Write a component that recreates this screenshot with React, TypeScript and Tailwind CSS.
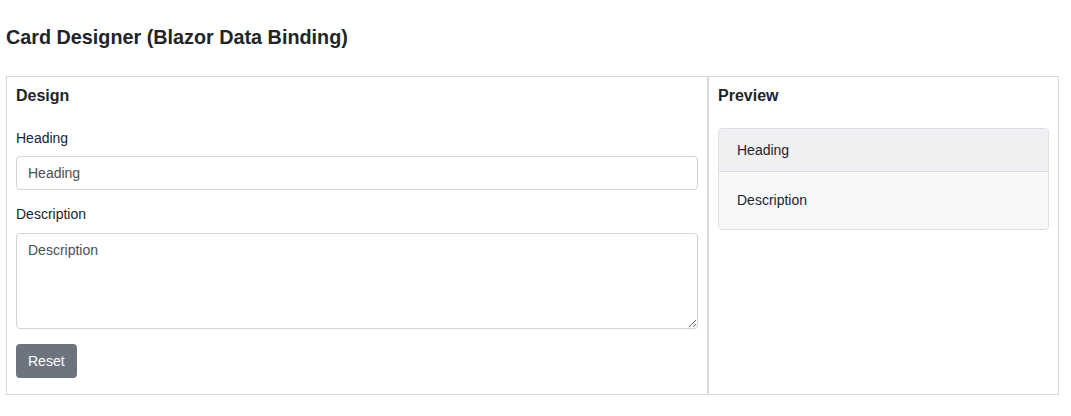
import React from "react";

export default function App() {
  return (
    <div
      className="bg-white w-[1071px] h-[416px] px-[6px] pt-[25px] text-[#212529]"
      style={{ fontFamily: '"Liberation Sans", Arial, sans-serif' }}
    >
      <h5 className="text-[19.8px] leading-[24px] font-bold m-0">Card Designer (Blazor Data Binding)</h5>
      <div className="flex w-[1053px] mt-[27px]">
        <div className="w-[702px] border border-[#d9d9d9] p-[9px] pb-[16px]">
          <h6 className="text-[16px] leading-[19px] font-bold">Design</h6>
          <label className="block text-[14px] leading-[21px] mt-[23px] mb-[7px]">Heading</label>
          <input
            defaultValue="Heading"
            className="block w-full h-[34px] border border-[#ced4da] rounded-[4px] px-[11px] text-[14px] text-[#495057] outline-none"
          />
          <label className="block text-[14px] leading-[21px] mt-[14px] mb-[8px]">Description</label>
          <textarea
            defaultValue="Description"
            className="block w-full h-[96px] border border-[#ced4da] rounded-[4px] px-[11px] py-[6px] text-[14px] leading-[21px] text-[#495057] outline-none"
          />
          <button className="mt-[15px] h-[34px] px-[12px] rounded-[4px] bg-[#6c757d] text-white text-[14px]">
            Reset
          </button>
        </div>
        <div className="w-[351px] border border-[#d9d9d9] p-[9px]">
          <h6 className="text-[16px] leading-[19px] font-bold">Preview</h6>
          <div className="mt-[23px] border border-[#dcdee1] rounded-[4px] overflow-hidden">
            <div className="h-[43px] bg-[#eff0f2] border-b border-[#d8dadd] px-[18px] flex items-center text-[14px]">
              Heading
            </div>
            <div className="h-[57px] bg-[#f7f8f9] px-[18px] flex items-center text-[14px]">Description</div>
          </div>
        </div>
      </div>
    </div>
  );
}
